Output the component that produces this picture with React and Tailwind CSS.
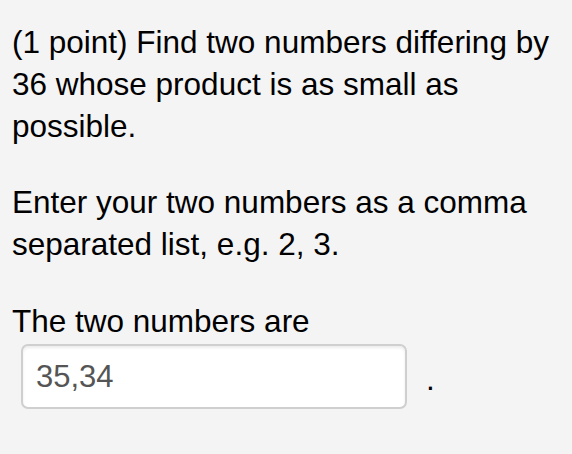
import React from "react";

const App = () => {
  return (
    <div
      className="min-h-screen w-full bg-[#f4f4f4] text-black pl-3 pr-2 pt-[21px]"
      style={{ fontFamily: '"Liberation Sans", Arial, sans-serif' }}
    >
      <p className="text-[31.5px] leading-[42px] w-[556px]">
        (1 point) Find two numbers differing by 36 whose product is as small as possible.
      </p>
      <p className="text-[31.5px] leading-[42px] mt-[34px] w-[556px]">
        Enter your two numbers as a comma separated list, e.g. 2, 3.
      </p>
      <p className="text-[31.5px] leading-[42px] mt-[35px]">The two numbers are</p>
      <div className="flex items-center mt-[2px] ml-[9px]">
        <input
          type="text"
          defaultValue="35,34"
          className="w-[386px] h-[65px] rounded-[7px] border-2 border-[#cfcfcf] bg-white px-[13px] text-[31px] text-[#555] shadow-[inset_0_2px_3px_rgba(0,0,0,0.08)] outline-none"
          style={{ fontFamily: '"Liberation Sans", Arial, sans-serif' }}
        />
        <span className="text-[31.5px] leading-[42px] ml-[19px] mt-[4px]">.</span>
      </div>
    </div>
  );
};

export default App;
